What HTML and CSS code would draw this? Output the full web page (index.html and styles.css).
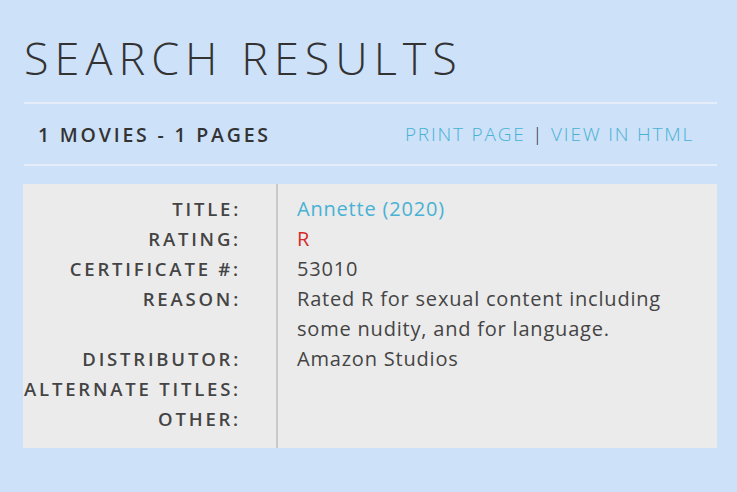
FILE: index.html
```html
<!DOCTYPE html>
<html lang="en">
<head>
<meta charset="utf-8">
<title>Search Results</title>
<link rel="stylesheet" href="styles.css">
</head>
<body>
<main class="page">
  <h1 class="page-title">SEARCH RESULTS</h1>
  <div class="summary-bar">
    <span class="summary-count">1 MOVIES - 1 PAGES</span>
    <span class="summary-links"><a href="#" class="link">PRINT PAGE</a> <span class="sep">|</span> <a href="#" class="link">VIEW IN HTML</a></span>
  </div>
  <section class="result">
    <div class="label">TITLE:</div>
    <div class="value"><a href="#" class="link">Annette (2020)</a></div>
    <div class="label">RATING:</div>
    <div class="value rating">R</div>
    <div class="label">CERTIFICATE #:</div>
    <div class="value">53010</div>
    <div class="label">REASON:</div>
    <div class="value">Rated R for sexual content including some nudity, and for language.</div>
    <div class="label">DISTRIBUTOR:</div>
    <div class="value">Amazon Studios</div>
    <div class="label">ALTERNATE TITLES:</div>
    <div class="value"></div>
    <div class="label">OTHER:</div>
    <div class="value"></div>
  </section>
</main>
</body>
</html>
```
FILE: styles.css
```css
html, body {
  margin: 0;
  padding: 0;
  background: #cde1f9;
}
body {
  font-family: "Open Sans", Lato, sans-serif;
  color: #444;
}
.page {
  padding: 28px 20px 40px 23px;
}
.page-title {
  margin: 0;
  font-size: 45px;
  line-height: 60px;
  font-weight: 300;
  letter-spacing: 6px;
  color: #333;
  padding-left: 1px;
}
.summary-bar {
  margin-top: 14px;
  margin-left: 1px;
  height: 60px;
  border-top: 2px solid #e4edf9;
  border-bottom: 2px solid #e4edf9;
  display: flex;
  align-items: center;
  justify-content: space-between;
  padding: 0 23px 0 14px;
}
.summary-count {
  font-size: 19.5px;
  font-weight: 600;
  letter-spacing: 2.8px;
  color: #333;
}
.summary-links {
  font-size: 19px;
  font-weight: 300;
  letter-spacing: 1.8px;
  color: #333;
}
.link {
  color: #48b2d4;
  text-decoration: none;
}
.sep {
  color: #333;
}
.result {
  margin-top: 18px;
  display: grid;
  grid-template-columns: 254px 1fr;
  padding: 10px 0 14px 0;
  background:
    linear-gradient(to right, transparent 253px, #c9c9c9 253px, #c9c9c9 255px, transparent 255px),
    #ebebeb;
  line-height: 30px;
}
.label {
  text-align: right;
  padding-right: 36px;
  font-size: 18.5px;
  font-weight: 600;
  letter-spacing: 2.8px;
  color: #444;
  white-space: nowrap;
}
.value {
  padding: 0 40px 0 20px;
  font-size: 20px;
  letter-spacing: 0.8px;
  color: #444;
}
.rating {
  color: #d52b25;
}
```
